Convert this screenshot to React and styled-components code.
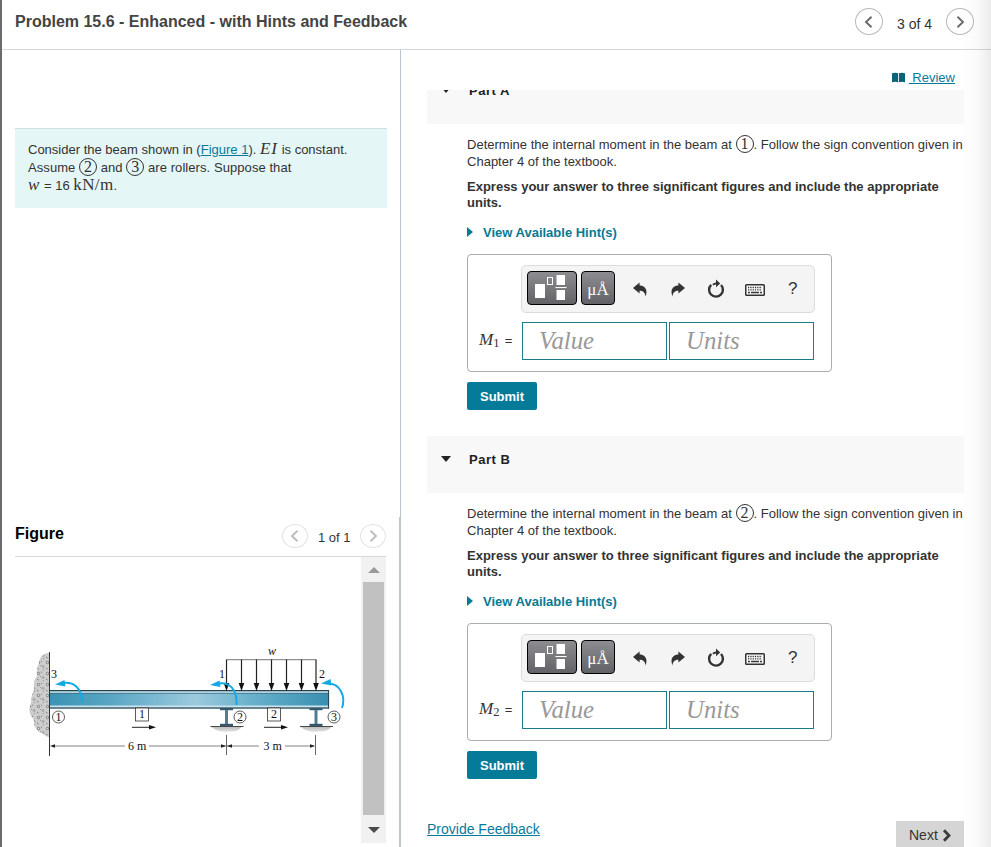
import React from 'react'
import styled, { createGlobalStyle } from 'styled-components'

const LOAD_ARROWS = [226.5, 241.5, 256.5, 271.5, 286.5, 301.5, 316]

const PARTS = [
  { title: 'Part A', node: '1' },
  { title: 'Part B', node: '2' },
]

const App = () => {
  return (
    <Page>
      <GlobalStyle />
      <Header>
        <Title>Problem 15.6 - Enhanced - with Hints and Feedback</Title>
        <Pager>
          <PagerButton><Chevron left /></PagerButton>
          <PagerText>3 of 4</PagerText>
          <PagerButton><Chevron /></PagerButton>
        </Pager>
      </Header>
      <Columns>
        <LeftColumn>
          <ProblemPane>
            <ProblemBox>
              <ProblemLine>
                Consider the beam shown in (<TextLink>Figure 1</TextLink>). <MathText $italic>EI</MathText> is constant.
              </ProblemLine>
              <ProblemLine $spaced>
                Assume <Circled>2</Circled> and <Circled>3</Circled> are rollers. Suppose that
              </ProblemLine>
              <ProblemLine>
                <MathText $italic>w</MathText> = 16 <MathText>kN/m</MathText>.
              </ProblemLine>
            </ProblemBox>
          </ProblemPane>
          <FigurePane>
            <FigureHeader>
              <FigureTitle>Figure</FigureTitle>
              <FigurePager>
                <PagerButton $small><Chevron left small /></PagerButton>
                <PagerText $small>1 of 1</PagerText>
                <PagerButton $small><Chevron small /></PagerButton>
              </FigurePager>
            </FigureHeader>
            <FigureBody>
              <BeamFigure />
              <Scrollbar>
                <ScrollArrow $up />
                <ScrollThumb />
                <ScrollArrow />
              </Scrollbar>
            </FigureBody>
          </FigurePane>
        </LeftColumn>
        <RightColumn>
          <ReviewRow>
            <BookIcon />
            <ReviewLink>&nbsp;Review</ReviewLink>
          </ReviewRow>
          <Parts>
            <PartsInner>
              {PARTS.map(part => (
                <Part key={part.title} {...part} />
              ))}
              <BottomRow>
                <FeedbackLink>Provide Feedback</FeedbackLink>
                <NextButton>Next <NextIcon /></NextButton>
              </BottomRow>
            </PartsInner>
          </Parts>
        </RightColumn>
      </Columns>
      <EdgeShade />
    </Page>
  )
}

const Part = ({ title, node }) => {
  return (
    <PartSection>
      <PartHeader>
        <Caret />
        <PartTitle>{title}</PartTitle>
      </PartHeader>
      <PartBody>
        <Question>
          <div>Determine the internal moment in the beam at <Circled>{node}</Circled>. Follow the sign convention given in</div>
          <div>Chapter 4 of the textbook.</div>
        </Question>
        <Instruction>
          <div>Express your answer to three significant figures and include the appropriate</div>
          <div>units.</div>
        </Instruction>
        <Hint><HintArrow />View Available Hint(s)</Hint>
        <AnswerBox>
          <Toolbar>
            <ToolButton $wide><TemplateIcon /></ToolButton>
            <ToolButton>μÅ</ToolButton>
            <ToolIcons>
              <ArrowIcon />
              <ArrowIcon flip />
              <ResetIcon />
              <KeyboardIcon />
              <HelpMark>?</HelpMark>
            </ToolIcons>
          </Toolbar>
          <AnswerRow>
            <AnswerLabel><i>M</i><sub>{node}</sub> <span>=</span></AnswerLabel>
            <Field>Value</Field>
            <Field>Units</Field>
          </AnswerRow>
        </AnswerBox>
        <Submit>Submit</Submit>
      </PartBody>
    </PartSection>
  )
}

const Chevron = ({ left, small }) => (
  <svg width="10" height="14" viewBox="0 0 10 14">
    <path
      d={left ? 'M7.5 1.8 L2 7 L7.5 12.2' : 'M2.5 1.8 L8 7 L2.5 12.2'}
      fill="none"
      stroke={small ? '#bdbdbd' : '#6a6a6a'}
      strokeWidth="1.9"
    />
  </svg>
)

const NextIcon = () => (
  <svg width="10" height="13" viewBox="0 0 10 13">
    <path d="M2 1.3 L7 6.5 L2 11.7" fill="none" stroke="#3c3c3c" strokeWidth="2.8" />
  </svg>
)

const BookIcon = () => (
  <svg width="13" height="11" viewBox="0 0 14 11">
    <path d="M0 1 Q3.5 -0.2 6.5 1 V10.6 Q3.5 9.6 0 10.6Z M7.4 1 Q10.5 -0.2 14 1 V10.6 Q10.5 9.6 7.4 10.6Z" fill="#0b6377" />
  </svg>
)

const TemplateIcon = () => (
  <svg width="34" height="28" viewBox="0 0 34 28">
    <rect x="0" y="10" width="10" height="14" fill="#fff" />
    <rect x="12.5" y="3.5" width="5" height="7" fill="none" stroke="#fff" />
    <rect x="21.5" y="1" width="8.5" height="10" fill="#fff" />
    <rect x="20.5" y="13" width="11" height="1.1" fill="#fff" />
    <rect x="21.5" y="16" width="8.5" height="10" fill="#fff" />
  </svg>
)

const ArrowIcon = ({ flip }) => (
  <svg width="14" height="15" viewBox="0 0 14 15">
    <path
      d="M0 6 L6.6 0.4 V3.5 C11.8 3.5 15.4 8 12.4 14.6 C12.4 10.6 10 8.7 6.6 8.7 V11.6 Z"
      fill="#333"
      transform={flip ? 'translate(14 0) scale(-1 1)' : undefined}
    />
  </svg>
)

const ResetIcon = () => (
  <svg width="18" height="20" viewBox="0 0 18 20">
    <path d="M4.2 5.8 A6.9 6.9 0 1 0 14 6" fill="none" stroke="#333" strokeWidth="2.4" />
    <path d="M5.4 5 Q7 3.6 9 3.4 V0.5 L13.2 4.4 L9 8.2 V5.6 Q7.6 5.6 6.2 6.4Z" fill="#333" />
  </svg>
)

const KeyboardIcon = () => (
  <svg width="20" height="12" viewBox="0 0 20 12">
    <rect x="0.75" y="0.75" width="18.5" height="10.5" rx="0.8" fill="#fff" stroke="#333" strokeWidth="1.5" />
    <path d="M3 3.5 H17 M3 5.9 H17" stroke="#333" strokeWidth="1.3" strokeDasharray="1.3 1" />
    <path d="M3 8.5 H5 M6 8.5 H14 M15 8.5 H17" stroke="#333" strokeWidth="1.4" />
  </svg>
)

const Support = ({ x }) => (
  <g>
    <path d={`M${x - 15} 727 H${x + 15} Q${x + 12} 732 ${x + 2} 731.5 Q${x - 8} 733 ${x - 15} 727Z`} fill="url(#ground)" />
    <path d={`M${x - 16} 726.5 H${x + 17}`} stroke="#333" strokeWidth="0.9" />
    <rect x={x - 6.5} y="708" width="13" height="2.2" fill="#35596a" />
    <rect x={x - 1.5} y="710" width="3" height="14" fill="#527d91" />
    <rect x={x - 6.5} y="723.8" width="13" height="2.4" fill="#35596a" />
  </g>
)

const NodeMark = ({ x, label }) => (
  <g>
    <circle cx={x} cy="717" r="6" fill="#fff" stroke="#333" strokeWidth="0.8" />
    <text x={x} y="721" textAnchor="middle">{label}</text>
  </g>
)

const MemberMark = ({ x, label }) => (
  <g>
    <rect x={x - 6.5} y="708" width="13" height="13" fill="#fff" stroke="#333" strokeWidth="0.8" />
    <text x={x} y="718" textAnchor="middle">{label}</text>
    <path d={`M${x - 10} 727.3 H${x + 8}`} stroke="#222" />
    <path d={`M${x + 14} 727.3 l-7 -2.3 v4.6z`} fill="#111" />
  </g>
)

const MomentArrow = ({ d, tip }) => (
  <g>
    <path d={d} fill="none" stroke="#14a9e4" strokeWidth="2" />
    <path d={`M${tip} l9.5 -4.5 l1 6.5z`} fill="#14a9e4" />
  </g>
)

const BeamFigure = () => (
  <FigureSvg width="346" height="290" viewBox="15 557 346 290">
    <defs>
      <linearGradient id="steel" x1="0" x2="1">
        <stop offset="0" stopColor="#3b93b4" />
        <stop offset="0.2" stopColor="#55a4c2" />
        <stop offset="0.52" stopColor="#9bcade" />
        <stop offset="0.75" stopColor="#63adc9" />
        <stop offset="1" stopColor="#398fb1" />
      </linearGradient>
      <linearGradient id="ground" x1="0" x2="0" y1="0" y2="1">
        <stop offset="0" stopColor="#bdbdbd" />
        <stop offset="1" stopColor="#e2e2e2" />
      </linearGradient>
      <pattern id="rubble" width="9" height="11" patternUnits="userSpaceOnUse">
        <rect width="9" height="11" fill="#cdcdcd" />
        <circle cx="2.5" cy="2.5" r="1.2" fill="#e4e4e4" stroke="#555" strokeWidth="0.7" />
        <circle cx="7" cy="6.5" r="0.9" fill="#eee" stroke="#666" strokeWidth="0.6" />
        <path d="M1 8 l1.5 1 M5 1 l1 .5 M4 5 l.6 .6 M7 10 l.7 -.5" stroke="#555" strokeWidth="0.7" />
      </pattern>
    </defs>
    <path d="M49 653 Q45 653 43 655 Q39 658 39 663 Q36 669 37 676 Q33 681 34 689 Q31 697 31 703 Q28 710 31 716 Q35 720 34 725 Q38 733 42 733 Q46 737 49 737Z" fill="url(#rubble)" />
    <path d="M49.5 652 V756" stroke="#333" strokeWidth="1" />

    <rect x="50" y="690" width="279" height="18.5" fill="#cbe5ef" />
    <rect x="50" y="693" width="279" height="12.5" fill="url(#steel)" />
    <path d="M50 690.6 H329" stroke="#23424f" strokeWidth="1.3" />
    <path d="M50 693.3 H329" stroke="#39697d" strokeWidth="0.8" />
    <path d="M50 708 H329" stroke="#45616c" strokeWidth="1.6" />
    <path d="M328.6 690 V708.5" stroke="#23424f" strokeWidth="1" />

    <path d="M226.5 659.7 H316" stroke="#777" strokeWidth="1" />
    {LOAD_ARROWS.map(x => (
      <g key={x}>
        <path d={`M${x} 659.5 V684`} stroke="#222" strokeWidth="1.2" />
        <path d={`M${x} 691 l-2.8 -8 h5.6z`} fill="#111" />
      </g>
    ))}

    <Support x={226.5} />
    <Support x={316} />
    <MomentArrow d="M63 683 C73 681.5 82 687 82 703" tip="55 684.5" />
    <MomentArrow d="M219 683.5 C229 682 237.5 689 236.5 705" tip="210 685" />
    <MomentArrow d="M329 683.5 C340 684 346 696 342 708" tip="321 683.5" />

    <NodeMark x={58.5} label="1" />
    <NodeMark x={240} label="2" />
    <NodeMark x={334} label="3" />
    <MemberMark x={142} label="1" />
    <MemberMark x={274} label="2" />
    <text x="51" y="678">3</text>
    <text x="219" y="678">1</text>
    <text x="319" y="678">2</text>
    <text x="268" y="655" fontStyle="italic">w</text>

    <path d="M226.5 735 V755 M315.5 735 V755" stroke="#555" strokeWidth="0.9" />
    <path d="M52 746 H125 M149 746 H259 M285 746 H314" stroke="#666" strokeWidth="0.8" />
    <path d="M50 746 l5 -1.8 v3.6z M226 746 l-5 -1.8 v3.6z M227 746 l5 -1.8 v3.6z M315 746 l-5 -1.8 v3.6z" fill="#222" />
    <text x="128" y="750">6 m</text>
    <text x="263.5" y="750">3 m</text>
  </FigureSvg>
)

export default App

const GlobalStyle = createGlobalStyle`
  body {
    margin: 0;
    background: #fff;
    font-family: "Liberation Sans", Arial, sans-serif;
    overflow: hidden;
  }

  * {
    box-sizing: border-box;
  }
`
const Page = styled.div`
  position: relative;
  display: flex;
  flex-direction: column;
  height: 847px;
  border-left: 2px solid #6b6b6b;
  color: #333;
  background: #fff;
`
const Header = styled.header`
  display: flex;
  justify-content: space-between;
  height: 50px;
  padding: 8px 17px 0 13px;
  border-bottom: 1px solid #d5d9dc;
`
const Title = styled.h1`
  margin: 5px 0 0;
  font-size: 16px;
  line-height: 18px;
  color: #444;
  white-space: nowrap;
`
const Pager = styled.div`
  display: flex;
  align-items: flex-start;
  gap: 14px;
`
const PagerButton = styled.div`
  display: flex;
  align-items: center;
  justify-content: center;
  width: ${p => (p.$small ? 26 : 28)}px;
  height: ${p => (p.$small ? 24 : 27)}px;
  border: 1px solid ${p => (p.$small ? '#e2e2e2' : '#b9b9b9')};
  border-radius: 50%;
`
const PagerText = styled.span`
  width: ${p => (p.$small ? 32 : 35)}px;
  padding-top: ${p => (p.$small ? 5 : 8)}px;
  font-size: ${p => (p.$small ? 13 : 14)}px;
  line-height: 17px;
  white-space: nowrap;
`
const Columns = styled.div`
  display: flex;
  flex: 1;
  min-height: 0;
`
const LeftColumn = styled.div`
  display: flex;
  flex-direction: column;
  width: 399px;
`
const ProblemPane = styled.div`
  height: 467px;
  padding: 78px 13px 0;
  border-right: 1px solid #b9c5cc;
`
const ProblemBox = styled.div`
  width: 372px;
  height: 80px;
  padding: 12px 13px;
  border-top: 1px solid #cfe0e2;
  background: #e5f6f6;
`
const ProblemLine = styled.div`
  height: 18px;
  font-size: 13px;
  line-height: 18px;
  letter-spacing: ${p => (p.$spaced ? 0.07 : 0)}px;
  white-space: nowrap;
`
const TextLink = styled.a`
  color: #077a9a;
  text-decoration: underline;
`
const MathText = styled.span`
  font-family: "Liberation Serif", serif;
  font-size: 17px;
  line-height: 0;
  letter-spacing: ${p => (p.$italic ? 1 : 0.4)}px;
  font-style: ${p => (p.$italic ? 'italic' : 'normal')};
`
const Circled = styled.span`
  display: inline-flex;
  align-items: center;
  justify-content: center;
  width: 18px;
  height: 18px;
  margin: -4px 0;
  padding-bottom: 1px;
  border: 1px solid #333;
  border-radius: 50%;
  font-family: "Liberation Serif", serif;
  font-size: 16px;
  line-height: 15px;
  vertical-align: 0;
`
const FigurePane = styled.div`
  flex: 1;
  padding-left: 13px;
  border-right: 2px solid #bcc6cc;
`
const FigureHeader = styled.div`
  display: flex;
  justify-content: space-between;
  width: 371px;
  height: 40px;
  padding-top: 7px;
  border-bottom: 1px solid #d8d8d8;
`
const FigureTitle = styled.h2`
  margin: 0;
  font-size: 16px;
  line-height: 20px;
  color: #000;
`
const FigurePager = styled.div`
  display: flex;
  gap: 10px;
`
const FigureBody = styled.div`
  display: flex;
  width: 371px;
  height: 286px;
`
const FigureSvg = styled.svg`
  display: block;
  width: 346px;
  height: 290px;
  font-family: "Liberation Serif", serif;
  font-size: 12px;
  fill: #111;
`
const Scrollbar = styled.div`
  display: flex;
  flex-direction: column;
  align-items: center;
  justify-content: space-between;
  width: 25px;
  height: 286px;
  padding: 10px 0;
  background: #f1f1f1;
`
const ScrollArrow = styled.div`
  border: 6px solid transparent;
  border-${p => (p.$up ? 'bottom' : 'top')}-color: ${p => (p.$up ? '#9a9a9a' : '#4a4a4a')};
  border-${p => (p.$up ? 'top' : 'bottom')}-width: 0;
`
const ScrollThumb = styled.div`
  width: 21px;
  height: 233px;
  margin-bottom: 3px;
  background: #c1c1c1;
`
const RightColumn = styled.main`
  display: flex;
  flex-direction: column;
  width: 563px;
  padding-left: 26px;
`
const ReviewRow = styled.div`
  display: flex;
  justify-content: flex-end;
  align-items: center;
  gap: 4px;
  height: 40px;
  padding: 14px 9px 0 0;
`
const ReviewLink = styled(TextLink)`
  font-size: 13px;
`
const Parts = styled.div`
  flex: 1;
  min-height: 0;
  overflow: hidden;
`
const PartsInner = styled.div`
  margin-top: -23px;
`
const PartSection = styled.section`
  height: 369px;
`
const PartHeader = styled.div`
  display: flex;
  height: 57px;
  padding: 14px 14px 0;
  background: #f8f8f8;
`
const Caret = styled.div`
  width: 0;
  height: 0;
  margin: 6px 18px 0 0;
  border: 5.5px solid transparent;
  border-top: 6px solid #222;
  border-bottom: 0;
`
const PartTitle = styled.h3`
  margin: 0;
  font-size: 13px;
  letter-spacing: 0.5px;
  line-height: 20px;
  color: #222;
`
const PartBody = styled.div`
  padding: 12px 0 0 40px;
`
const Question = styled.div`
  height: 34px;
  font-size: 13px;
  letter-spacing: 0.01px;
  line-height: 17px;
  white-space: nowrap;
`
const Instruction = styled.div`
  margin-top: 9px;
  font-size: 13px;
  font-weight: bold;
  line-height: 16px;
  white-space: nowrap;
`
const Hint = styled.div`
  display: flex;
  align-items: center;
  margin-top: 14px;
  font-size: 13px;
  font-weight: bold;
  line-height: 16px;
  color: #077a94;
`
const HintArrow = styled.div`
  margin: 0 10px 2px 0;
  border: 5px solid transparent;
  border-left: 6px solid #077a94;
  border-right: 0;
`
const AnswerBox = styled.div`
  width: 365px;
  height: 118px;
  margin-top: 13px;
  padding: 10px 0 0 11px;
  border: 1px solid #a9adad;
  border-radius: 4px;
`
const Toolbar = styled.div`
  display: flex;
  gap: 4px;
  width: 294px;
  height: 48px;
  margin-left: 42px;
  padding: 5px;
  border: 1px solid #dcdcdc;
  border-radius: 5px;
  background: #f4f4f4;
`
const ToolButton = styled.div`
  display: flex;
  flex-shrink: 0;
  align-items: center;
  justify-content: center;
  width: ${p => (p.$wide ? 50 : 34)}px;
  height: 34px;
  padding-top: ${p => (p.$wide ? 0 : 3)}px;
  border: 1px solid #000;
  border-radius: 4px;
  background: linear-gradient(#8c8c91, #626267);
  color: #fff;
  font-family: "Liberation Serif", serif;
  font-size: 17px;
`
const ToolIcons = styled.div`
  display: grid;
  grid-template-columns: repeat(5, 38.2px);
  align-items: center;
  justify-items: center;
  height: 34px;
  margin: 1px 0 0 2px;
  color: #333;

  svg:nth-child(4) {
    margin-top: 2px;
  }
`
const HelpMark = styled.span`
  font-size: 17px;
`
const AnswerRow = styled.div`
  display: flex;
  gap: 2px;
  margin-top: 9px;
`
const AnswerLabel = styled.div`
  width: 41px;
  font-family: "Liberation Serif", serif;
  font-size: 17px;
  line-height: 36px;
  white-space: nowrap;

  sub {
    font-size: 12.5px;
    line-height: 1;
    vertical-align: -2px;
  }

  span {
    margin-left: 1px;
    font-family: "Liberation Sans", sans-serif;
    font-size: 13px;
  }
`
const Field = styled.div`
  width: 145px;
  height: 38px;
  padding-left: 16px;
  border: 1px solid #1b7c8c;
  background: #fff;
  color: #999;
  font-family: "Liberation Serif", serif;
  font-size: 24.8px;
  font-style: italic;
  line-height: 36px;
`
const Submit = styled.button`
  display: block;
  width: 70px;
  height: 28px;
  margin-top: 10px;
  padding: 0;
  border: 0;
  border-radius: 2px;
  background: #067a99;
  color: #fff;
  font-family: inherit;
  font-size: 13px;
  font-weight: bold;
`
const BottomRow = styled.div`
  display: flex;
  justify-content: space-between;
  margin-top: 16px;
`
const FeedbackLink = styled(TextLink)`
  font-size: 14px;
  line-height: 16px;
`
const NextButton = styled.div`
  display: flex;
  align-items: center;
  gap: 4px;
  width: 68px;
  height: 28px;
  padding-left: 13px;
  background: #d5d5d5;
  font-size: 14px;
  white-space: nowrap;
`
const EdgeShade = styled.div`
  position: absolute;
  top: 0;
  right: 0;
  width: 30px;
  height: 847px;
  background: linear-gradient(to right, rgba(0, 0, 0, 0), rgba(0, 0, 0, 0.025) 60%, rgba(0, 0, 0, 0.08));
  pointer-events: none;
`
